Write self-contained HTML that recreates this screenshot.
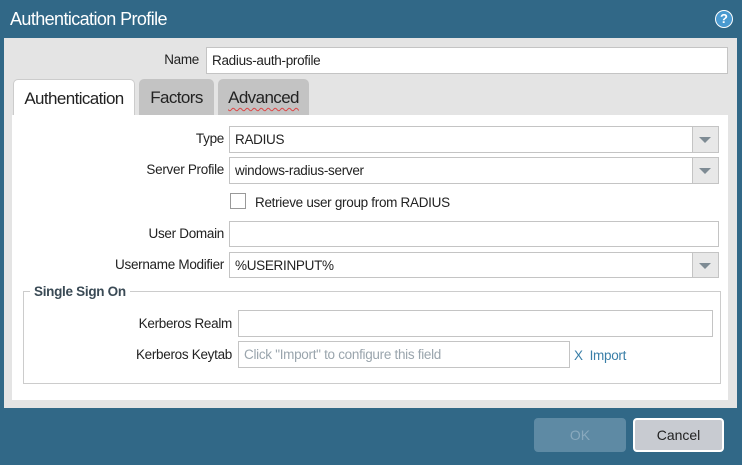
<!DOCTYPE html>
<html><head><style>
body{margin:0;width:742px;height:465px;background:#316887;font-family:"Liberation Sans",sans-serif;font-size:13px;color:#222;position:relative;overflow:hidden}
.a{position:absolute}
.title{left:10px;top:9px;color:#fff;font-size:18px;letter-spacing:-0.6px}
.help{left:715px;top:10px;width:18px;height:18px;border-radius:50%;background:#4a9ad0;border:1px solid #fff;box-sizing:border-box;color:#fff;font-weight:bold;font-size:13px;text-align:center;line-height:16px}
.gray{left:4px;top:38px;width:733px;height:370px;background:#e4e4e4}
.white{left:12px;top:115px;width:716px;height:285px;background:#fff}
.inp{position:absolute;background:#fff;border:1px solid #c4c4c4;box-sizing:border-box;padding-left:5px;font-size:13.5px;letter-spacing:-0.3px;display:flex;align-items:center}
.lbl{position:absolute;text-align:right;font-size:13.5px;letter-spacing:-0.3px}
.arr{position:absolute;right:0;top:0;bottom:0;width:25px;background:#e8e8e8;border-left:1px solid #c4c4c4}
.arr:after{content:"";position:absolute;left:6px;top:10px;border-left:6px solid transparent;border-right:6px solid transparent;border-top:6px solid #7e8b94}
.tab{position:absolute;top:79px;height:37px;border-radius:5px 5px 0 0;background:#c3c3c3;font-size:17px;letter-spacing:-0.6px;text-align:center;line-height:37px;box-sizing:border-box}
.btn{position:absolute;top:418px;height:34px;border-radius:4px;text-align:center;line-height:34px;font-size:14px;box-sizing:border-box}
</style></head><body>
<div class="a title">Authentication Profile</div>
<div class="a help">?</div>
<div class="a gray"></div>
<div class="lbl" style="left:100px;width:99px;top:52px">Name</div>
<div class="inp" style="left:206px;top:47px;width:522px;height:27px">Radius-auth-profile</div>
<div class="tab" style="left:13px;width:122px;background:#fff;border:1px solid #ccc;border-bottom:none;height:38px">Authentication</div>
<div class="tab" style="left:139px;width:75px">Factors</div>
<div class="tab" style="left:218px;width:91px"><span style="text-decoration:underline wavy #d44;text-underline-offset:4px;text-decoration-thickness:1px">Advanced</span></div>
<div class="a white"></div>
<div class="lbl" style="left:100px;width:124px;top:131px">Type</div>
<div class="inp" style="left:229px;top:126px;width:490px;height:27px">RADIUS<div class="arr"></div></div>
<div class="lbl" style="left:100px;width:124px;top:162px">Server Profile</div>
<div class="inp" style="left:229px;top:157px;width:490px;height:27px">windows-radius-server<div class="arr"></div></div>
<div class="a" style="left:230px;top:193px;width:16px;height:16px;border:1px solid #999;box-sizing:border-box;background:#fff"></div>
<div class="lbl" style="left:255px;top:195px;text-align:left">Retrieve user group from RADIUS</div>
<div class="lbl" style="left:100px;width:124px;top:226px">User Domain</div>
<div class="inp" style="left:229px;top:221px;width:490px;height:26px"></div>
<div class="lbl" style="left:90px;width:134px;top:257px">Username Modifier</div>
<div class="inp" style="left:229px;top:252px;width:490px;height:26px">%USERINPUT%<div class="arr"></div></div>
<div class="a" style="left:23px;top:291px;width:698px;height:93px;border:1px solid #ccc;box-sizing:border-box"></div>
<div class="a" style="left:30px;top:284px;background:#fff;padding:0 4px;font-weight:bold;color:#3a4a55;font-size:13.5px;letter-spacing:-0.3px">Single Sign On</div>
<div class="lbl" style="left:100px;width:132px;top:316px">Kerberos Realm</div>
<div class="inp" style="left:238px;top:310px;width:475px;height:27px"></div>
<div class="lbl" style="left:100px;width:132px;top:347px">Kerberos Keytab</div>
<div class="inp" style="left:238px;top:341px;width:332px;height:27px;color:#9aa5ad">Click "Import" to configure this field</div>
<div class="lbl" style="left:574px;top:348px;color:#3a7fa8;text-align:left">X&nbsp; Import</div>
<div class="btn" style="left:534px;width:92px;background:#5e8aa4;color:#89a9bd">OK</div>
<div class="btn" style="left:633px;width:91px;background:#c8cbd1;border:2px solid #fff;line-height:30px">Cancel</div>
</body></html>
